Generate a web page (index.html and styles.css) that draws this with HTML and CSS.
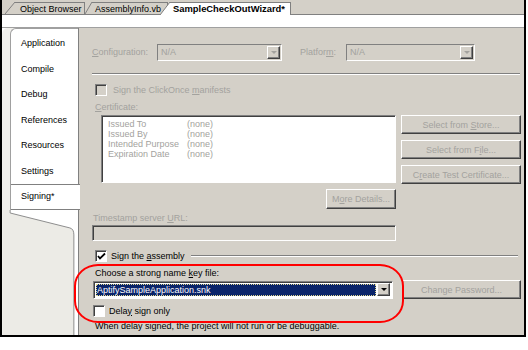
FILE: index.html
```html
<!DOCTYPE html>
<html>
<head>
  <link rel="stylesheet" href="styles.css">
</head>
<body>
  <div class="window">
    <div class="tabstrip">
      <div class="doc-tab first">
        <svg class="slant" width="10" height="12"><path d="M0 12 L10 0" stroke="#808080" fill="none"/></svg>
        <span class="tab-label w70">Object Browser</span>
      </div>
      <div class="doc-tab">
        <svg class="slant" width="7" height="12"><path d="M0 12 L7 0" stroke="#808080" fill="none"/></svg>
        <span class="tab-label w76">AssemblyInfo.vb</span>
      </div>
      <div class="doc-tab active">
        <svg class="slant" width="10" height="13"><path d="M0 13 L10 0 L10 13 Z" fill="#fff"/><path d="M0 13 L10 0" stroke="#808080" fill="none"/></svg>
        <span class="tab-label w121">SampleCheckOutWizard*</span>
      </div>
    </div>
    <div class="band"></div>

    <div class="main">
      <div class="nav">
        <div class="nav-list">
          <div class="nav-item">Application</div>
          <div class="nav-item">Compile</div>
          <div class="nav-item">Debug</div>
          <div class="nav-item">References</div>
          <div class="nav-item">Resources</div>
          <div class="nav-item">Settings</div>
          <div class="nav-item selected">Signing*</div>
        </div>
        <svg class="nav-fold" width="76" height="126" viewBox="0 0 76 126">
          <path d="M0 0 H8 V3 L68 18 Q72 19 72 25 V126 H0 Z" fill="#ecebe6"/>
          <path d="M8 0 V3 L68 18 Q72 19 72 25 V126" stroke="#8c8c8c" fill="none"/>
        </svg>
      </div>

      <div class="panel">
        <div class="row config-row">
          <span class="label dis w65"><u>C</u>onfiguration:</span>
          <div class="combo dis w125"><span class="combo-text">N/A</span><span class="drop"><i class="arrow gray"></i></span></div>
          <span class="label dis w46 ml18">Platfor<u>m</u>:</span>
          <div class="combo dis w129"><span class="combo-text">N/A</span><span class="drop"><i class="arrow gray"></i></span></div>
        </div>

        <div class="etched top-rule"></div>

        <div class="row check-row clickonce">
          <span class="check dis"></span>
          <span class="label dis">Sign the ClickOnce <u>m</u>anifests</span>
        </div>

        <div class="row text-row cert-label"><span class="label dis"><u>C</u>ertificate:</span></div>

        <div class="cert-area">
          <div class="listbox">
            <div class="cert-line"><span class="key">Issued To</span><span>(none)</span></div>
            <div class="cert-line"><span class="key">Issued By</span><span>(none)</span></div>
            <div class="cert-line"><span class="key">Intended Purpose</span><span>(none)</span></div>
            <div class="cert-line"><span class="key">Expiration Date</span><span>(none)</span></div>
          </div>
          <div class="cert-buttons">
            <div class="btn dis"><span>Select from <u>S</u>tore...</span></div>
            <div class="btn dis"><span>Select from F<u>i</u>le...</span></div>
            <div class="btn dis"><span>C<u>r</u>eate Test Certificate...</span></div>
          </div>
        </div>

        <div class="details-row">
          <div class="btn dis details"><span>M<u>o</u>re Details...</span></div>
        </div>

        <div class="row text-row ts-label"><span class="label dis">Timestamp server <u>U</u>RL:</span></div>
        <div class="textbox dis"></div>

        <div class="row check-row assembly">
          <span class="check on"><svg width="9" height="9" viewBox="0 0 9 9"><path d="M1 4 L3 6.5 L8 1.5" stroke="#000" stroke-width="1.8" fill="none"/></svg></span>
          <span class="label">Sign the <u>a</u>ssembly</span>
          <span class="etched rule-fill"></span>
        </div>

        <div class="row text-row key-label"><span class="label">Choose a strong name <u>k</u>ey file:</span></div>

        <div class="row key-row">
          <div class="combo active-combo">
            <span class="combo-sel">AptifySampleApplication.snk</span>
            <span class="drop"><i class="arrow"></i></span>
          </div>
          <div class="btn dis change"><span>Change Password...</span></div>
        </div>

        <div class="row check-row delay">
          <span class="check"></span>
          <span class="label">Dela<u>y</u> sign only</span>
        </div>

        <div class="row text-row note"><span class="label">When delay signed, the project will not run or be debuggable.</span></div>
      </div>
    </div>

    <div class="callout"></div>
  </div>
</body>
</html>
```
FILE: styles.css
```css
body {
  margin: 0;
  width: 528px;
  height: 350px;
  background: #fff;
  font-family: "Liberation Sans", Arial, sans-serif;
  font-size: 9px;
  color: #000;
  overflow: hidden;
}

.window {
  position: relative;
  width: 522px;
  height: 335px;
  border-left: 2px solid #000;
  border-right: 2px solid #000;
  border-bottom: 2px solid #000;
  background: #d4d0c8;
}

/* document tabs */
.tabstrip {
  height: 14px;
  border-bottom: 1px solid #808080;
  display: flex;
  align-items: flex-start;
  padding-left: 3px;
}

.doc-tab {
  display: flex;
  align-items: flex-end;
  margin-top: 2px;
  height: 12px;
}

.doc-tab.active {
  height: 13px;
  margin-left: -8px;
  position: relative;
  z-index: 1;
}

.slant {
  display: block;
}

.tab-label {
  line-height: 12px;
  border-top: 1px solid #808080;
  border-right: 1px solid #808080;
  padding-left: 5px;
  box-sizing: border-box;
  height: 12px;
  white-space: nowrap;
}

.active .tab-label {
  height: 13px;
  background: #fff;
  font-weight: bold;
  font-size: 9.4px;
  padding-left: 3px;
}

.w70 { width: 70px; }
.w76 { width: 76px; padding-left: 3px; }
.w121 { width: 121px; }

.band {
  height: 12px;
  background: #fff;
  border-bottom: 1px solid #a0a0a0;
}

/* left navigation */
.main {
  display: flex;
  height: 307px;
}

.nav {
  width: 76px;
  background: #fff;
  display: flex;
  flex-direction: column;
}

.nav-list {
  margin-left: 8px;
  padding-top: 2px;
  border-left: 1px solid #a0a0a0;
  border-top: 1px solid #a0a0a0;
  border-top-left-radius: 6px;
  background: #fff;
  box-shadow: -8px 0 0 #f1f0ec;
}

.nav-item {
  height: 25.5px;
  line-height: 25.5px;
  padding-left: 10px;
  font-size: 9px;
}

.nav-item.selected {
  border-top: 1px solid #808080;
  border-bottom: 1px solid #808080;
  height: 23.5px;
  line-height: 23.5px;
  margin-right: -2px;
  position: relative;
  z-index: 1;
  background: #fff;
}

.nav-fold {
  display: block;
  flex: 1;
}

/* property page */
.panel {
  flex: 1;
  border-left: 1px solid #808080;
  padding: 16px 3px 0 13px;
  background: #d4d0c8;
}

.row {
  display: flex;
  align-items: center;
}

.label {
  white-space: nowrap;
  line-height: 11px;
}

.dis { color: #a3a29e; }

.w65 { width: 65px; flex: none; }
.w46 { width: 46px; flex: none; }
.ml18 { margin-left: 18px; }
.w125 { width: 125px; }
.w129 { width: 129px; }

.combo {
  height: 17px;
  box-sizing: border-box;
  border: 1px solid;
  border-color: #808080 #fff #fff #808080;
  display: flex;
  align-items: center;
  justify-content: space-between;
  padding: 1px;
  flex: none;
}

.combo-text {
  padding-left: 2px;
  line-height: 11px;
}

.drop {
  width: 13px;
  height: 13px;
  box-sizing: border-box;
  border: 1px solid;
  border-color: #fff #404040 #404040 #fff;
  box-shadow: inset -1px -1px #808080;
  background: #d4d0c8;
  display: flex;
  align-items: center;
  justify-content: center;
}

.arrow {
  width: 0;
  height: 0;
  border-left: 3px solid transparent;
  border-right: 3px solid transparent;
  border-top: 3px solid #000;
}

.arrow.gray { border-top-color: #a3a29e; }

.etched {
  border-top: 1px solid #808080;
  border-bottom: 1px solid #fff;
}

.top-rule {
  margin-top: 12px;
  width: 428px;
}

.check-row .check {
  margin-right: 4px;
}

.check {
  width: 12px;
  height: 12px;
  box-sizing: border-box;
  border: 1px solid;
  border-color: #808080 #fff #fff #808080;
  box-shadow: inset 1px 1px #404040;
  background: #fff;
  flex: none;
  display: flex;
  align-items: center;
  justify-content: center;
}

.check.dis { background: #d4d0c8; }

.check svg { display: block; margin: 1px 0 0 1px; }

.clickonce {
  margin-top: 9px;
  height: 12px;
  padding-left: 3px;
}

.clickonce .check { margin-right: 6px; }

.text-row {
  height: 11px;
}

.cert-label {
  margin-top: 6px;
  padding-left: 3px;
}

.cert-area {
  margin-top: 2px;
  display: flex;
  height: 69px;
}

.listbox {
  margin-left: 9px;
  width: 295px;
  height: 68px;
  box-sizing: border-box;
  background: #fff;
  border: 1px solid;
  border-color: #808080 #fff #fff #808080;
  box-shadow: inset 1px 1px #404040;
  padding: 3px 0 0 6px;
  color: #a3a29e;
}

.cert-line {
  display: flex;
  line-height: 10px;
}

.cert-line .key {
  width: 79px;
}

.cert-buttons {
  margin-left: 5px;
  display: flex;
  flex-direction: column;
  gap: 6px;
}

.btn {
  height: 19px;
  box-sizing: border-box;
  border: 1px solid;
  border-color: #fff #404040 #404040 #fff;
  box-shadow: inset -1px -1px #808080;
  background: #d4d0c8;
  display: flex;
  align-items: center;
  justify-content: center;
  white-space: nowrap;
}

.cert-buttons .btn { width: 120px; }

.details-row {
  margin-top: 5px;
  padding-left: 234px;
}

.btn.details {
  width: 70px;
  height: 20px;
}

.ts-label {
  margin-top: 4px;
  padding-left: 1px;
}

.textbox {
  margin-top: 1px;
  width: 304px;
  height: 16px;
  box-sizing: border-box;
  border: 1px solid;
  border-color: #808080 #fff #fff #808080;
  box-shadow: inset 1px 1px #404040;
}

.assembly {
  margin-top: 9px;
  height: 12px;
  padding-left: 3px;
}

.rule-fill {
  flex: 1;
  margin: 0 3px 0 6px;
}

.key-label {
  margin-top: 6px;
  padding-left: 3px;
}

.key-row {
  margin-top: 1px;
  height: 19px;
  padding-left: 1px;
}

.active-combo {
  width: 300px;
  height: 18px;
  box-shadow: inset 1px 1px #404040;
  background: #fff;
  padding: 2px;
}

.combo-sel {
  flex: 1;
  align-self: stretch;
  background: #0a246a;
  color: #fff;
  outline: 1px dotted #e0d890;
  outline-offset: -1px;
  line-height: 12px;
  padding-left: 1px;
  margin-right: 1px;
}

.btn.change {
  width: 119px;
  height: 19px;
  margin-left: 9px;
}

.delay {
  margin-top: 6px;
  height: 12px;
  padding-left: 1px;
}

.note {
  margin-top: 4px;
  padding-left: 3px;
}

/* red annotation ring */
.callout {
  position: absolute;
  left: 72px;
  top: 264px;
  width: 326px;
  height: 55px;
  border: 2px solid #f00;
  border-radius: 24px / 22px;
}
```
